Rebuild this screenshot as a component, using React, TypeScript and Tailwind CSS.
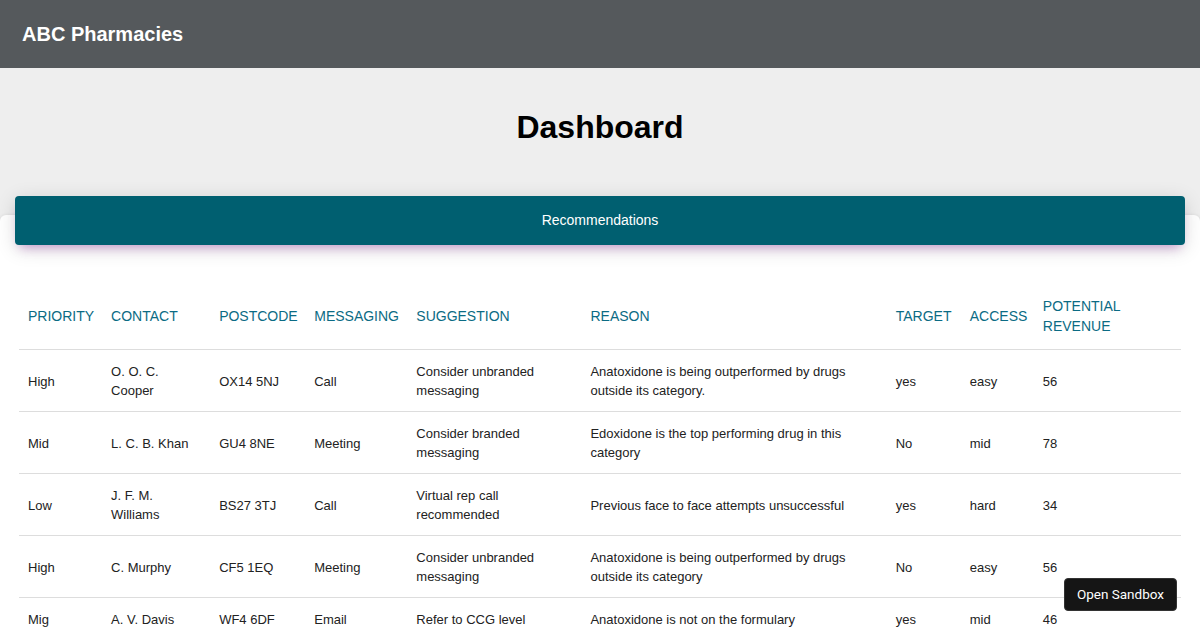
import React from 'react';

interface Row {
  priority: string;
  contact: string;
  postcode: string;
  messaging: string;
  suggestion: string;
  reason: string;
  target: string;
  access: string;
  revenue: number;
}

const rows: Row[] = [
  {
    priority: 'High',
    contact: 'O. O. C. Cooper',
    postcode: 'OX14 5NJ',
    messaging: 'Call',
    suggestion: 'Consider unbranded messaging',
    reason: 'Anatoxidone is being outperformed by drugs outside its category.',
    target: 'yes',
    access: 'easy',
    revenue: 56,
  },
  {
    priority: 'Mid',
    contact: 'L. C. B. Khan',
    postcode: 'GU4 8NE',
    messaging: 'Meeting',
    suggestion: 'Consider branded messaging',
    reason: 'Edoxidone is the top performing drug in this category',
    target: 'No',
    access: 'mid',
    revenue: 78,
  },
  {
    priority: 'Low',
    contact: 'J. F. M. Williams',
    postcode: 'BS27 3TJ',
    messaging: 'Call',
    suggestion: 'Virtual rep call recommended',
    reason: 'Previous face to face attempts unsuccessful',
    target: 'yes',
    access: 'hard',
    revenue: 34,
  },
  {
    priority: 'High',
    contact: 'C. Murphy',
    postcode: 'CF5 1EQ',
    messaging: 'Meeting',
    suggestion: 'Consider unbranded messaging',
    reason: 'Anatoxidone is being outperformed by drugs outside its category',
    target: 'No',
    access: 'easy',
    revenue: 56,
  },
  {
    priority: 'Mig',
    contact: 'A. V. Davis',
    postcode: 'WF4 6DF',
    messaging: 'Email',
    suggestion: 'Refer to CCG level',
    reason: 'Anatoxidone is not on the formulary',
    target: 'yes',
    access: 'mid',
    revenue: 46,
  },
];

const columns = [
  { label: 'PRIORITY', width: 'w-[83px]' },
  { label: 'CONTACT', width: 'w-[108px]' },
  { label: 'POSTCODE', width: 'w-[95px]' },
  { label: 'MESSAGING', width: 'w-[102px]' },
  { label: 'SUGGESTION', width: 'w-[174px]' },
  { label: 'REASON', width: 'w-[305px]' },
  { label: 'TARGET', width: 'w-[74px]' },
  { label: 'ACCESS', width: 'w-[73px]' },
  { label: 'POTENTIAL REVENUE', width: 'w-[147px]' },
];

const App: React.FC = () => {
  return (
    <div className="min-h-[630px] bg-[#eeeeee] font-['Liberation_Sans',Arial,sans-serif]">
      <header className="flex h-[68px] items-center bg-[#55595c] px-[22px]">
        <h1 className="text-[20px] font-bold text-white">ABC Pharmacies</h1>
      </header>

      <h2 className="pb-[50px] pt-[40px] text-center text-[32px] font-bold leading-[38px] text-black">
        Dashboard
      </h2>

      <div className="mt-[19px] flow-root rounded-md bg-white pb-4 shadow-[0_1px_4px_0_rgba(0,0,0,0.14)]">
        <div className="relative mx-[15px] -mt-[19px] flex h-[49px] items-center justify-center rounded bg-[#005f70] text-[14px] text-white shadow-[0_4px_20px_0_rgba(0,0,0,0.14),0_7px_10px_-5px_rgba(156,39,176,0.4)]">
          Recommendations
        </div>

        <div className="px-[19px] pt-[38px]">
          <table className="w-full table-fixed border-collapse text-left">
            <thead>
              <tr className="border-b border-[#dddddd]">
                {columns.map((col) => (
                  <th
                    key={col.label}
                    className={`${col.width} px-[9px] py-[13px] align-middle text-[14px] font-normal leading-[20px] text-[#0b6b84]`}
                  >
                    {col.label === 'POTENTIAL REVENUE' ? (
                      <>
                        POTENTIAL
                        <br />
                        REVENUE
                      </>
                    ) : (
                      col.label
                    )}
                  </th>
                ))}
              </tr>
            </thead>
            <tbody className="text-[13px] leading-[19px] text-[#222222]">
              {rows.map((row, i) => (
                <tr key={i} className="border-b border-[#dddddd]">
                  <td className="px-[9px] pb-[11px] pt-[12px]">{row.priority}</td>
                  <td className="px-[9px] pb-[11px] pt-[12px]">{row.contact}</td>
                  <td className="px-[9px] pb-[11px] pt-[12px]">{row.postcode}</td>
                  <td className="px-[9px] pb-[11px] pt-[12px]">{row.messaging}</td>
                  <td className="px-[9px] pb-[11px] pt-[12px]">{row.suggestion}</td>
                  <td className="px-[9px] pb-[11px] pt-[12px]">{row.reason}</td>
                  <td className="px-[9px] pb-[11px] pt-[12px]">{row.target}</td>
                  <td className="px-[9px] pb-[11px] pt-[12px]">{row.access}</td>
                  <td className="px-[9px] pb-[11px] pt-[12px]">{row.revenue}</td>
                </tr>
              ))}
            </tbody>
          </table>
        </div>
      </div>

      <button className="fixed bottom-[19px] right-[23px] h-[33px] rounded-[4px] border border-[#333] bg-[#151515] px-3 font-['Roboto',sans-serif] text-[13.5px] text-white">
        Open Sandbox
      </button>
    </div>
  );
};

export default App;
